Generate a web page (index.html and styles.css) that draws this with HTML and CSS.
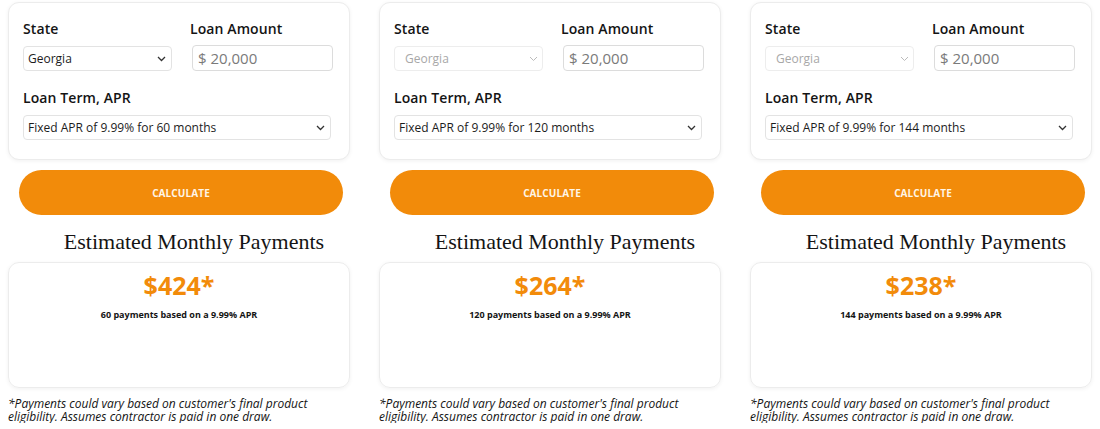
FILE: index.html
```html
<!DOCTYPE html>
<html lang="en">
<head>
<meta charset="utf-8">
<title>Loan Calculator</title>
<link rel="stylesheet" href="styles.css">
</head>
<body>
<div class="calculators">

  <section class="calc">
    <div class="form-card">
      <div class="row">
        <div class="field state">
          <label class="label">State</label>
          <div class="select">
            <span>Georgia</span>
            <svg class="chev" width="9" height="6" viewBox="0 0 9 6"><path d="M1 1l3.5 3.5L8 1" fill="none" stroke="currentColor" stroke-width="1.3"/></svg>
          </div>
        </div>
        <div class="field amount">
          <label class="label">Loan Amount</label>
          <div class="input">$ 20,000</div>
        </div>
      </div>
      <div class="field term">
        <label class="label">Loan Term, APR</label>
        <div class="select">
          <span>Fixed APR of 9.99% for 60 months</span>
          <svg class="chev" width="9" height="6" viewBox="0 0 9 6"><path d="M1 1l3.5 3.5L8 1" fill="none" stroke="currentColor" stroke-width="1.3"/></svg>
        </div>
      </div>
    </div>
    <button class="calc-btn">CALCULATE</button>
    <h2 class="heading">Estimated Monthly Payments</h2>
    <div class="result-card">
      <div class="amount-value">$424*</div>
      <div class="amount-note">60 payments based on a 9.99% APR</div>
    </div>
    <p class="footnote">*Payments could vary based on customer's final product eligibility. Assumes contractor is paid in one draw.</p>
  </section>

  <section class="calc">
    <div class="form-card">
      <div class="row">
        <div class="field state">
          <label class="label">State</label>
          <div class="select disabled">
            <span>Georgia</span>
            <svg class="chev" width="9" height="6" viewBox="0 0 9 6"><path d="M1 1l3.5 3.5L8 1" fill="none" stroke="currentColor" stroke-width="1"/></svg>
          </div>
        </div>
        <div class="field amount">
          <label class="label">Loan Amount</label>
          <div class="input">$ 20,000</div>
        </div>
      </div>
      <div class="field term">
        <label class="label">Loan Term, APR</label>
        <div class="select">
          <span>Fixed APR of 9.99% for 120 months</span>
          <svg class="chev" width="9" height="6" viewBox="0 0 9 6"><path d="M1 1l3.5 3.5L8 1" fill="none" stroke="currentColor" stroke-width="1.3"/></svg>
        </div>
      </div>
    </div>
    <button class="calc-btn">CALCULATE</button>
    <h2 class="heading">Estimated Monthly Payments</h2>
    <div class="result-card">
      <div class="amount-value">$264*</div>
      <div class="amount-note">120 payments based on a 9.99% APR</div>
    </div>
    <p class="footnote">*Payments could vary based on customer's final product eligibility. Assumes contractor is paid in one draw.</p>
  </section>

  <section class="calc">
    <div class="form-card">
      <div class="row">
        <div class="field state">
          <label class="label">State</label>
          <div class="select disabled">
            <span>Georgia</span>
            <svg class="chev" width="9" height="6" viewBox="0 0 9 6"><path d="M1 1l3.5 3.5L8 1" fill="none" stroke="currentColor" stroke-width="1"/></svg>
          </div>
        </div>
        <div class="field amount">
          <label class="label">Loan Amount</label>
          <div class="input">$ 20,000</div>
        </div>
      </div>
      <div class="field term">
        <label class="label">Loan Term, APR</label>
        <div class="select">
          <span>Fixed APR of 9.99% for 144 months</span>
          <svg class="chev" width="9" height="6" viewBox="0 0 9 6"><path d="M1 1l3.5 3.5L8 1" fill="none" stroke="currentColor" stroke-width="1.3"/></svg>
        </div>
      </div>
    </div>
    <button class="calc-btn">CALCULATE</button>
    <h2 class="heading">Estimated Monthly Payments</h2>
    <div class="result-card">
      <div class="amount-value">$238*</div>
      <div class="amount-note">144 payments based on a 9.99% APR</div>
    </div>
    <p class="footnote">*Payments could vary based on customer's final product eligibility. Assumes contractor is paid in one draw.</p>
  </section>

</div>
</body>
</html>
```

FILE: styles.css
```css
* { box-sizing: border-box; }

html, body {
  margin: 0;
  background: #ffffff;
}

body {
  padding: 2px 8px 0 8px;
  font-family: "Open Sans", "Noto Sans", sans-serif;
  color: #151515;
}

.calculators {
  display: flex;
  gap: 29px;
}

.calc {
  width: 342px;
  display: flex;
  flex-direction: column;
}

.form-card {
  height: 158px;
  border: 1px solid #ececec;
  border-radius: 11px;
  box-shadow: 0 1px 4px rgba(0, 0, 0, 0.06);
  padding: 16px 15px 0 14px;
  background: #fff;
}

.row {
  display: flex;
  gap: 20px;
}

.field {
  display: flex;
  flex-direction: column;
}

.state { width: 149px; }
.amount { width: 141px; }
.amount .label { margin-left: -2px; }
.term { width: 308px; margin-top: 17px; }

.label {
  font-size: 14px;
  font-weight: 600;
  line-height: 20px;
  color: #141414;
  margin-bottom: 7px;
  letter-spacing: 0.1px;
}

.select {
  height: 25px;
  border: 1px solid #e3e3e3;
  border-radius: 4px;
  display: flex;
  align-items: center;
  justify-content: space-between;
  padding: 0 5px 0 4px;
  font-size: 12px;
  color: #1c1c1c;
  background: #fff;
}

.select .chev { color: #333; }

.select.disabled {
  border-color: #ededed;
  color: #a8a8a8;
  padding-left: 10px;
  padding-right: 4px;
}

.select.disabled .chev { color: #bbb; }

.input {
  height: 26px;
  margin-top: -1px;
  border: 1px solid #dcdcdc;
  border-radius: 4px;
  padding: 0 5px;
  display: flex;
  align-items: center;
  font-size: 15px;
  color: #7a7a7a;
}

.calc-btn {
  margin: 10px 0 0 11px;
  width: 324px;
  height: 45px;
  border: none;
  border-radius: 23px;
  background: #f28b0a;
  color: #fff5e6;
  font-family: "Open Sans", "Noto Sans", sans-serif;
  font-size: 10px;
  font-weight: 700;
  letter-spacing: 0.1px;
  padding: 0;
}

.heading {
  margin: 13px 0 0 0;
  padding-left: 30px;
  text-align: center;
  font-family: "Liberation Serif", "DejaVu Serif", serif;
  font-weight: 400;
  font-size: 22px;
  line-height: 28px;
  color: #141414;
}

.result-card {
  margin-top: 6px;
  height: 126px;
  border: 1px solid #ececec;
  border-radius: 11px;
  box-shadow: 0 1px 4px rgba(0, 0, 0, 0.06);
  padding-top: 7px;
  display: flex;
  flex-direction: column;
  align-items: center;
}

.amount-value {
  font-size: 25px;
  font-weight: 700;
  line-height: 30px;
  color: #f28b0a;
}

.amount-note {
  margin-top: 8px;
  font-size: 9px;
  font-weight: 700;
  line-height: 13px;
  color: #141414;
}

.footnote {
  margin: 9px 0 0 0;
  font-size: 12px;
  font-style: italic;
  line-height: 13px;
  color: #141414;
}
```
